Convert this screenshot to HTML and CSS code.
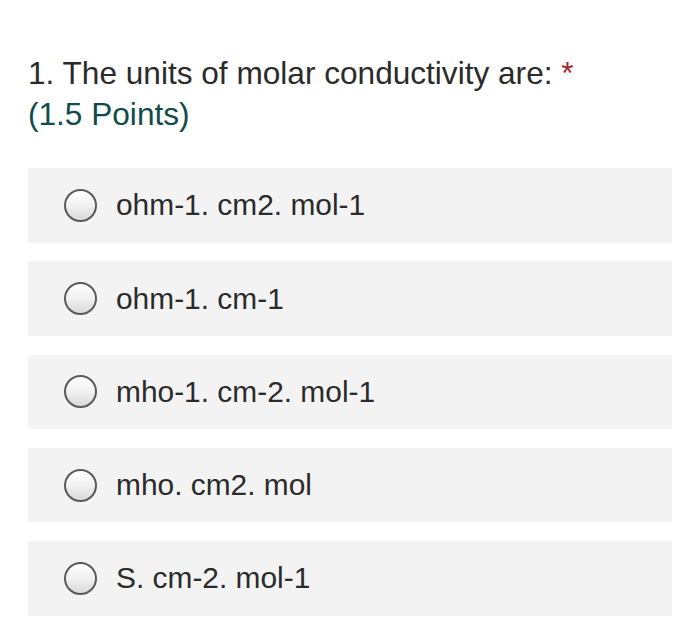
FILE: index.html
```html
<!DOCTYPE html>
<html lang="en">
<head>
<meta charset="utf-8">
<title>Question</title>
<link rel="stylesheet" href="styles.css">
</head>
<body>
<div class="question">
  <div class="title">
    <div class="title-text">1. The units of molar conductivity are: <span class="required">*</span></div>
    <div class="points">(1.5 Points)</div>
  </div>
  <div class="options">
    <label class="option"><span class="radio"></span><span class="label">ohm-1. cm2. mol-1</span></label>
    <label class="option"><span class="radio"></span><span class="label">ohm-1. cm-1</span></label>
    <label class="option"><span class="radio"></span><span class="label">mho-1. cm-2. mol-1</span></label>
    <label class="option"><span class="radio"></span><span class="label">mho. cm2. mol</span></label>
    <label class="option"><span class="radio"></span><span class="label">S. cm-2. mol-1</span></label>
  </div>
</div>
</body>
</html>
```

FILE: styles.css
```css
html, body {
  margin: 0;
  padding: 0;
  background: #ffffff;
}

body {
  font-family: "Liberation Sans", Arial, sans-serif;
  color: #333333;
}

.question {
  padding: 52.5px 28px 0 28px;
}

.title {
  font-size: 31.6px;
  line-height: 41px;
}

.title-text {
  color: #2b2b2b;
}

.required {
  color: #a4262c;
}

.points {
  color: #0f4c4a;
}

.options {
  margin-top: 33.5px;
  display: flex;
  flex-direction: column;
  gap: 18.75px;
}

.option {
  display: flex;
  align-items: center;
  height: 74.5px;
  background: #f3f3f3;
  padding-left: 36px;
  gap: 19px;
}

.radio {
  box-sizing: border-box;
  width: 33px;
  height: 33px;
  border-radius: 50%;
  border: 2px solid #5a5a5a;
  background: linear-gradient(to bottom, #ffffff 0%, #f1f1f1 50%, #d9d9d9 100%);
  flex: none;
}

.label {
  font-size: 29.9px;
  line-height: 36px;
  color: #2b2b2b;
}
```
